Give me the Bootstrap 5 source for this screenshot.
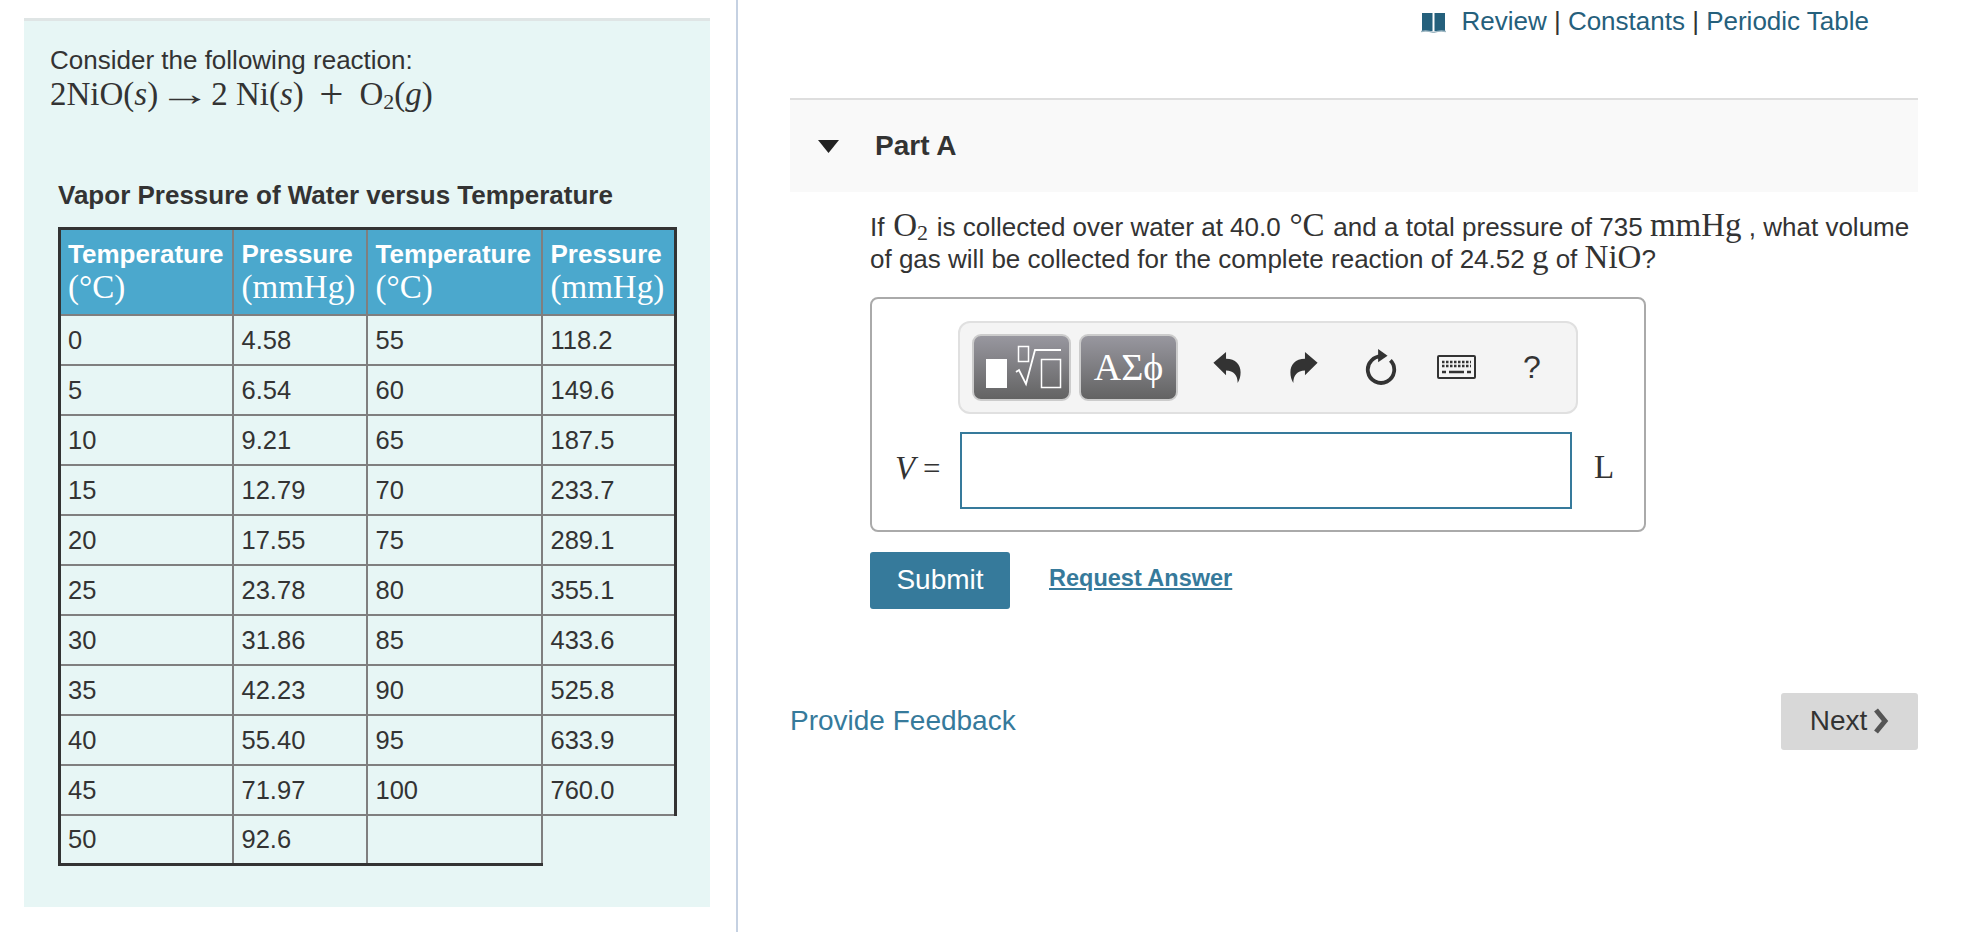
<!DOCTYPE html>
<html lang="en">

<head>
    <meta charset="UTF-8">
    <meta name="viewport" content="width=device-width, initial-scale=1.0">
    <title>Part A</title>
    <link href="https://cdn.jsdelivr.net/npm/bootstrap@5.3.2/dist/css/bootstrap.min.css" rel="stylesheet">
    <style>
        body {
            font-family: "Liberation Sans", Arial, sans-serif;
            font-size: 26px;
            color: #333;
            background: #fff;
            overflow: hidden;
        }

        .math {
            font-family: "Liberation Serif", "Times New Roman", serif;
            font-size: 33px;
            line-height: 1;
        }

        .math sub {
            font-size: 22px;
            bottom: -0.2em;
            line-height: 0;
        }

        .reaction-arrow {
            display: inline-block;
            line-height: 0;
            margin: 0 10px;
            transform: scaleX(1.6);
        }

        .reaction-plus {
            display: inline-block;
            line-height: 0;
            margin: 0 2px;
            transform: scale(1.3);
        }

        .left-col {
            width: 738px;
            height: 932px;
            padding: 18px 26px 0 24px;
            border-right: 2px solid #c5d1e2;
            flex-shrink: 0;
        }

        .stim-panel {
            height: 889px;
            background: #e7f6f5;
            border-top: 3px solid #dfe5e5;
            padding: 22px 0 0 26px;
            line-height: 35px;
        }

        .stim-title {
            font-size: 26px;
            font-weight: 700;
            margin: 68px 0 16px 8px;
            line-height: 32px;
        }

        .vapor-table {
            margin-left: 8px;
            border-collapse: collapse;
            table-layout: fixed;
            width: 616px;
            line-height: 30px;
            font-size: 25.5px;
        }

        .vapor-table th,
        .vapor-table td {
            border: 2px solid #7f7f7f;
            padding: 0 8px;
            font-weight: 400;
            vertical-align: middle;
        }

        .vapor-table td {
            height: 50px;
        }

        .vapor-table th {
            background: #4ba8cd;
            color: #fff;
            height: 86px;
            padding-bottom: 2px;
            line-height: 32px;
            font-size: 26px;
            white-space: nowrap;
        }

        .vapor-table th b {
            display: block;
        }

        .vapor-table th .math {
            display: block;
            line-height: 34px;
        }

        .vapor-table thead th {
            border-top: 3px solid #333;
        }

        .vapor-table tr > :first-child {
            border-left: 3px solid #333;
            padding-left: 7px;
        }

        .vapor-table tr > .edge-right {
            border-right: 3px solid #333;
        }

        .vapor-table tbody tr:last-child td {
            border-bottom: 3px solid #333;
        }

        .right-col {
            padding: 0 52px;
            flex-grow: 1;
        }

        .top-links {
            height: 98px;
            padding: 4px 49px 0 0;
            line-height: 34px;
            gap: 15px;
        }

        .top-links a,
        .link-plain {
            color: #25607c;
            text-decoration: none;
        }

        .part-band {
            height: 94px;
            background: #f9f9f9;
            border-top: 2px solid #dedede;
            padding-left: 28px;
            gap: 36px;
            font-weight: 700;
            font-size: 28px;
        }

        .part-body {
            padding: 19px 0 0 80px;
        }

        .question {
            line-height: 32px;
            margin-bottom: 21.5px;
            white-space: nowrap;
        }

        .question .math {
            line-height: 0;
        }

        .question .math-gap {
            margin: 0 1.5px;
        }

        .answer-box {
            width: 776px;
            height: 235px;
            border: 2px solid #aaa;
            border-radius: 8px;
            padding: 22px 25px 0 23px;
        }

        .tool-bar {
            width: 620px;
            height: 93px;
            margin-left: 63px;
            background: #f4f4f4;
            border: 2px solid #e0e0e0;
            border-radius: 12px;
            padding: 0 12px;
        }

        .tool-dark {
            width: 99px;
            height: 67px;
            border: 2px solid #ccc;
            border-radius: 9px;
            background: linear-gradient(#98979f, #636363);
            color: #fff;
            margin-right: 8px;
            font-family: "Liberation Serif", serif;
            font-size: 38px;
            line-height: 1;
            flex-shrink: 0;
        }

        .tool-icons > :nth-child(1) { margin-left: 26px; }
        .tool-icons > :nth-child(2) { margin-left: 47px; }
        .tool-icons > :nth-child(3) { margin-left: 44px; }
        .tool-icons > :nth-child(4) { margin-left: 40px; }
        .tool-icons > :nth-child(5) { margin-left: 47px; font-size: 32px; }

        .answer-row {
            margin-top: 18px;
        }

        .answer-row .v-label {
            width: 65px;
            font-family: "Liberation Serif", serif;
            font-size: 31px;
            line-height: 1;
            white-space: nowrap;
            margin-top: -4px;
        }

        .v-label i {
            font-size: 33px;
        }

        .answer-input {
            width: 612px;
            height: 77px;
            border: 2px solid #367a9b;
            border-radius: 0;
        }

        .answer-row .l-unit {
            margin: -5px 0 0 22px;
        }

        .btn-submit {
            width: 140px;
            height: 57px;
            padding: 0;
            background: #367a9b;
            border: 0;
            border-radius: 3px;
            color: #fff;
            font-size: 28px;
        }

        .action-row {
            margin-top: 20px;
            gap: 39px;
        }

        .request-link {
            color: #367a9b;
            font-weight: 700;
            font-size: 23.5px;
            margin-top: -2px;
        }

        .foot-row {
            margin: 84px 0 0 -80px;
        }

        .foot-row .link-plain {
            color: #367a9b;
            font-size: 28px;
        }

        .btn-next {
            width: 137px;
            height: 57px;
            padding: 0;
            background: #d8d8d8;
            border: 0;
            border-radius: 3px;
            color: #333;
            font-size: 28px;
            gap: 6px;
        }
    </style>
</head>

<body>
    <div class="d-flex">
        <!-- stimulus -->
        <div class="left-col">
            <div class="stim-panel">
                <div>Consider the following reaction:</div>
                <div class="math">2NiO(<i>s</i>)<span class="reaction-arrow">→</span>2 Ni(<i>s</i>) &nbsp;<span class="reaction-plus">+</span>&nbsp; O<sub>2</sub>(<i>g</i>)</div>
                <div class="stim-title">Vapor Pressure of Water versus Temperature</div>
                <table class="vapor-table" id="vaporTable">
                    <colgroup>
                        <col style="width:173px">
                        <col style="width:134px">
                        <col style="width:175px">
                        <col style="width:134px">
                    </colgroup>
                    <thead>
                        <tr>
                            <th><b>Temperature</b><span class="math">(°C)</span></th>
                            <th><b>Pressure</b><span class="math">(mmHg)</span></th>
                            <th><b>Temperature</b><span class="math">(°C)</span></th>
                            <th class="edge-right"><b>Pressure</b><span class="math">(mmHg)</span></th>
                        </tr>
                    </thead>
                    <tbody>
                        <tr><td>0</td><td>4.58</td><td>55</td><td class="edge-right">118.2</td></tr>
                        <tr><td>5</td><td>6.54</td><td>60</td><td class="edge-right">149.6</td></tr>
                        <tr><td>10</td><td>9.21</td><td>65</td><td class="edge-right">187.5</td></tr>
                        <tr><td>15</td><td>12.79</td><td>70</td><td class="edge-right">233.7</td></tr>
                        <tr><td>20</td><td>17.55</td><td>75</td><td class="edge-right">289.1</td></tr>
                        <tr><td>25</td><td>23.78</td><td>80</td><td class="edge-right">355.1</td></tr>
                        <tr><td>30</td><td>31.86</td><td>85</td><td class="edge-right">433.6</td></tr>
                        <tr><td>35</td><td>42.23</td><td>90</td><td class="edge-right">525.8</td></tr>
                        <tr><td>40</td><td>55.40</td><td>95</td><td class="edge-right">633.9</td></tr>
                        <tr><td>45</td><td>71.97</td><td>100</td><td class="edge-right">760.0</td></tr>
                        <tr><td>50</td><td>92.6</td><td></td></tr>
                    </tbody>
                </table>
            </div>
        </div>

        <!-- question -->
        <div class="right-col">
            <div class="top-links d-flex justify-content-end align-items-start">
                <svg width="25" height="21" viewBox="0 0 25 21" class="mt-2" aria-hidden="true">
                    <path d="M1 1h10.5v18H1zM13.5 1H24v18H13.5z" fill="#25607c" />
                    <path d="M0 19.5q6-1.500 12.500 1q6.500-2.500 12.500-1" fill="none" stroke="#9db6c2" stroke-width="1.5" />
                </svg>
                <div><a href="#">Review</a> | <a href="#">Constants</a> | <a href="#">Periodic Table</a></div>
            </div>

            <div class="part-band d-flex align-items-center">
                <svg width="21" height="13" viewBox="0 0 21 13" aria-hidden="true">
                    <path d="M0 0h21L10.500 13z" fill="#222" />
                </svg>
                <span>Part A</span>
            </div>

            <div class="part-body">
                <div class="question">If <span class="math math-gap">O<sub>2</sub></span> is collected over water at 40.0 <span class="math math-gap">°C</span> and a total pressure of 735 <span class="math">mmHg</span> , what volume<br>of gas will be collected for the complete reaction of 24.52 <span class="math">g</span> of <span class="math">NiO</span>?</div>

                <div class="answer-box">
                    <div class="tool-bar d-flex align-items-center">
                        <div class="tool-dark">
                            <svg width="95" height="63" viewBox="0 0 95 63" class="d-block" aria-hidden="true">
                                <rect x="12" y="23" width="21" height="29" fill="#fff" />
                                <rect x="44.500" y="10.500" width="10" height="15" fill="none" stroke="#fff" stroke-width="1.5" />
                                <path d="M42 36l3-2 7 14 9-34h26" fill="none" stroke="#fff" stroke-width="1.8" />
                                <rect x="67.500" y="23.500" width="19" height="28" fill="none" stroke="#fff" stroke-width="1.5" />
                            </svg>
                        </div>
                        <div class="tool-dark d-flex align-items-center justify-content-center">ΑΣϕ</div>
                        <div class="tool-icons d-flex align-items-center">
                            <svg width="30" height="33" viewBox="0 0 30 34" aria-hidden="true">
                                <path d="M1 12L14 1v7c10 0 15 6 15 14 0 4-1 8-3 11 0-8-4-13-12-13v5z" fill="#333" />
                            </svg>
                            <svg width="30" height="33" viewBox="0 0 30 34" aria-hidden="true">
                                <path d="M29 12L16 1v7C6 8 1 14 1 22c0 4 1 8 3 11 0-8 4-13 12-13v5z" fill="#333" />
                            </svg>
                            <svg width="34" height="38" viewBox="0 0 36 40" aria-hidden="true">
                                <path d="M21 9A14 14 0 1 0 29 13" fill="none" stroke="#333" stroke-width="4" />
                                <path d="M16 1l10 7-10 7z" fill="#333" />
                            </svg>
                            <svg width="39" height="24" viewBox="0 0 39 24" aria-hidden="true">
                                <rect x="1" y="1" width="37" height="22" rx="1" fill="#f4f4f4" stroke="#333" stroke-width="2" />
                                <path d="M5 7h29M5 11h29" stroke="#333" stroke-width="2.500" stroke-dasharray="2.500 1.500" />
                                <path d="M5 17h4M12 17h15M30 17h4" stroke="#333" stroke-width="2.500" />
                            </svg>
                            <span>?</span>
                        </div>
                    </div>

                    <div class="answer-row d-flex align-items-center">
                        <div class="v-label"><i>V</i> =</div>
                        <input class="answer-input form-control" type="text" aria-label="V">
                        <span class="math l-unit">L</span>
                    </div>
                </div>

                <div class="action-row d-flex align-items-center">
                    <button class="btn btn-submit" type="button">Submit</button>
                    <a href="#" class="request-link">Request Answer</a>
                </div>

                <div class="foot-row d-flex justify-content-between align-items-center">
                    <a href="#" class="link-plain">Provide Feedback</a>
                    <button class="btn btn-next d-flex align-items-center justify-content-center" type="button">
                        Next
                        <svg width="16" height="26" viewBox="0 0 16 26" aria-hidden="true">
                            <path d="M3 2l9 11-9 11" fill="none" stroke="#555" stroke-width="5" />
                        </svg>
                    </button>
                </div>
            </div>
        </div>
    </div>

    <script src="https://cdn.jsdelivr.net/npm/bootstrap@5.3.2/dist/js/bootstrap.bundle.min.js"></script>
</body>

</html>
